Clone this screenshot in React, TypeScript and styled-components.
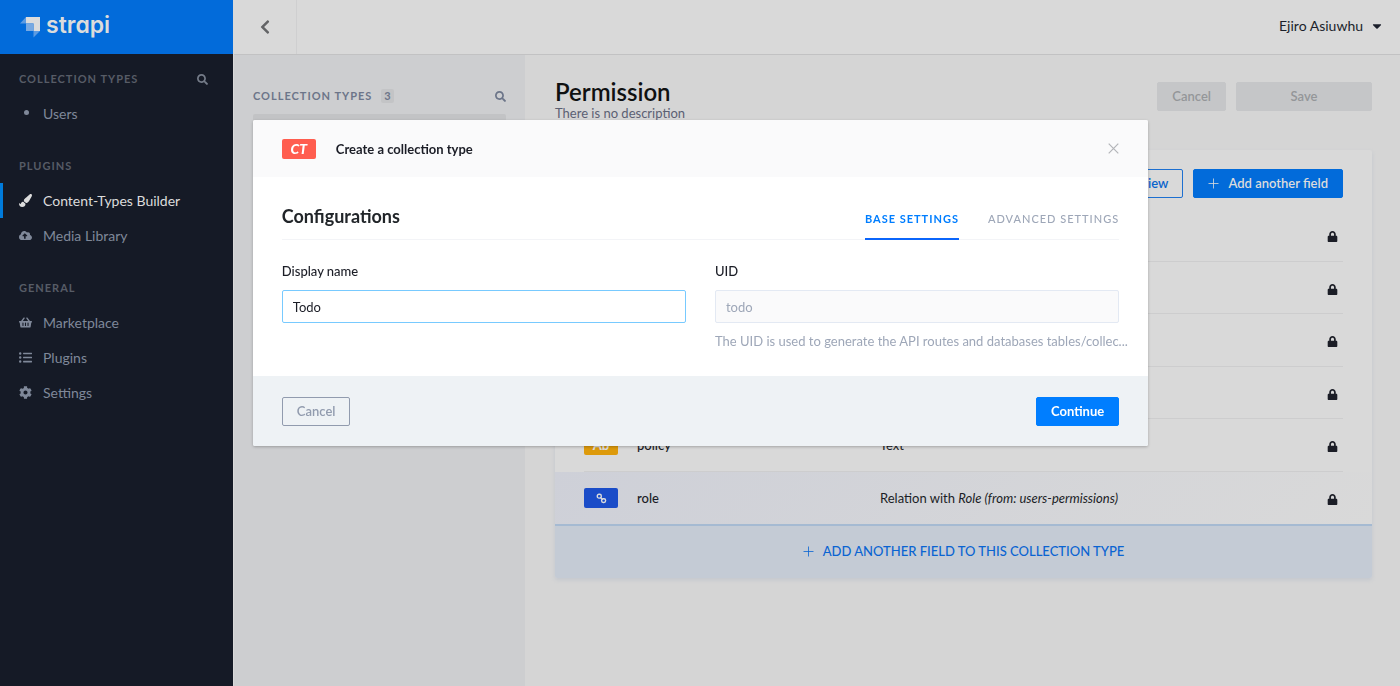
import React from 'react';
import styled, { createGlobalStyle, css } from 'styled-components';
import {
  FaPaintBrush,
  FaCloudUploadAlt,
  FaShoppingBasket,
  FaListUl,
  FaCog,
  FaSearch,
  FaChevronLeft,
  FaCaretDown,
  FaLock,
} from 'react-icons/fa';

const GlobalStyle = createGlobalStyle`
  *, *::before, *::after { box-sizing: border-box; }
  body {
    margin: 0;
    font-family: Lato, "Liberation Sans", sans-serif;
    font-size: 13px;
    line-height: 18px;
    color: #1b1d26;
    background: #d5d5d5;
    -webkit-font-smoothing: antialiased;
  }
  h1, h2, h3, p, ul { margin: 0; padding: 0; }
  ul { list-style: none; }
  button, input { font: inherit; color: inherit; margin: 0; }
  button { cursor: pointer; }
`;

const Page = styled.div`
  display: flex;
  min-height: 100vh;
`;

/* ---------- sidebar ---------- */

const Sidebar = styled.aside`
  flex: 0 0 234px;
  background: #151a26;
  border-right: 1px solid #d9d9d9;
`;

const Brand = styled.a`
  display: flex;
  align-items: center;
  gap: 5px;
  height: 54px;
  padding: 0 0 0 20px;
  background: #026bda;
  color: #dcdcdc;
  text-decoration: none;
`;

const BrandName = styled.span`
  font-family: Inter, Lato, sans-serif;
  font-size: 23px;
  line-height: 28px;
  font-weight: 600;
  font-feature-settings: "cv11";
  padding-bottom: 4px;
`;

const NavGroup = styled.section`
  padding-bottom: 26px;
  &:first-of-type { padding-top: 16px; }
`;

const NavHeading = styled.div`
  display: flex;
  align-items: center;
  justify-content: space-between;
  height: 18px;
  margin-bottom: 8px;
  padding: 0 25px 0 19px;
  color: #575c66;
`;

const SmallCaps = styled.h3`
  font-size: 11px;
  line-height: 18px;
  font-weight: 700;
  letter-spacing: 1px;
  text-transform: uppercase;
`;

const IconButton = styled.button`
  display: flex;
  align-items: center;
  justify-content: center;
  padding: 0;
  border: 0;
  background: none;
`;

const NavLink = styled.a<{ $active?: boolean }>`
  display: grid;
  grid-template-columns: 14px 1fr;
  gap: 11px;
  align-items: center;
  height: 35px;
  padding-left: 15px;
  border-left: 3px solid ${p => (p.$active ? '#007bdb' : 'transparent')};
  color: ${p => (p.$active ? '#dcdcdc' : '#7f8899')};
  font-size: 14px;
  text-decoration: none;
  svg { justify-self: center; }
`;

const Bullet = styled.i`
  justify-self: center;
  width: 5px;
  height: 5px;
  margin: 0 0 2px 3px;
  border-radius: 50%;
  background: currentColor;
`;

/* ---------- top bar ---------- */

const Content = styled.div`
  flex: 1;
  min-width: 0;
  display: flex;
  flex-direction: column;
`;

const TopBar = styled.header`
  display: flex;
  justify-content: space-between;
  height: 55px;
  background: #d9d9d9;
  border-bottom: 1px solid #c2c2c3;
`;

const BackButton = styled(IconButton)`
  width: 63px;
  border-right: 1px solid #cfcfd0;
  color: #636466;
`;

const UserMenu = styled.button`
  display: flex;
  align-items: center;
  gap: 7px;
  padding: 0 16px 2px 0;
  border: 0;
  background: none;
  font-size: 14px;
  color: #1b1f2b;
`;

const Columns = styled.div`
  flex: 1;
  display: flex;
`;

const TypesPanel = styled.aside`
  flex: 0 0 291px;
  padding: 32px 19px;
  background: #cdced0;
`;

const PanelHeading = styled.div`
  display: flex;
  align-items: center;
  gap: 9px;
  height: 18px;
  margin-bottom: 9px;
  color: #6c7589;
  button { margin-left: auto; }
`;

const Count = styled.span`
  padding: 0 3px;
  border-radius: 2px;
  background: #c3c4c6;
  font-size: 11px;
  line-height: 14px;
  font-weight: 700;
`;

const TypeItem = styled.a`
  display: block;
  height: 34px;
  border-radius: 2px;
  background: #c2c3c5;
  padding: 8px 16px;
  color: inherit;
  text-decoration: none;
`;

const Main = styled.main`
  flex: 1;
  min-width: 0;
  padding: 25px 28px 40px 30px;
`;

const TitleRow = styled.div`
  display: flex;
  justify-content: space-between;
  align-items: flex-start;
  height: 70px;
`;

const Title = styled.h1`
  font-size: 24px;
  line-height: 24px;
  font-weight: 600;
  color: #0f1111;
`;

const Description = styled.p`
  color: #5b6073;
`;

const Actions = styled.div`
  display: flex;
  justify-content: flex-end;
  gap: 10px;
`;

const PageActions = styled(Actions)`
  padding-top: 2px;
`;

const looks = {
  disabled: css`background: #c5c6c8; color: #949699; border-color: #c5c6c8;`,
  primary: css`background: #026bda; color: #dcdcdc; border-color: #026bda;`,
  outline: css`background: transparent; color: #0a64cc; border-color: #1d6fd0;`,
  bright: css`background: #007eff; color: #fff; border-color: #007eff;`,
  ghost: css`background: transparent; color: #919bae; border-color: #919bae;`,
};

const Button = styled.button<{ $look: keyof typeof looks; $wide?: boolean }>`
  display: flex;
  align-items: center;
  justify-content: center;
  gap: 9px;
  height: 29px;
  min-width: ${p => (p.$wide ? '136px' : '0')};
  padding: 0 14px 1px;
  border: 1px solid;
  border-radius: 2px;
  font-weight: ${p => (p.$look === 'bright' ? 700 : 600)};
  white-space: nowrap;
  ${p => looks[p.$look]}
`;

/* ---------- field list ---------- */

const Card = styled.section`
  background: #d9d9d9;
  border-radius: 2px;
  box-shadow: 0 2px 4px #c3c7ce;
`;

const CardHead = styled(Actions)`
  padding: 19px 29px 11px;
`;

const FieldTable = styled.table`
  width: 100%;
  border-collapse: collapse;
  table-layout: fixed;
  td { padding: 0; }
  td:first-child { width: 82px; padding-left: 29px; }
  td:nth-child(2) { width: 243px; }
  td:last-child { width: 60px; padding-right: 29px; }
`;

const FieldRow = styled.tr<{ $relation?: boolean }>`
  background: ${p => (p.$relation ? 'linear-gradient(135deg, #ced0d8, #d9d9d9)' : 'none')};
`;

const Cell = styled.div<{ $end?: boolean; $last?: boolean; $tall?: boolean }>`
  display: flex;
  align-items: center;
  justify-content: ${p => (p.$end ? 'flex-end' : 'flex-start')};
  height: ${p => (p.$tall ? '53px' : '52px')};
  padding: ${p => (p.$end ? '3px 5px 0 0' : '0')};
  border-bottom: ${p => (p.$last ? '0' : '1px solid #cdcdce')};
  white-space: pre;
`;

const FieldName = styled.span`
  font-weight: 500;
`;

const Badge = styled.span<{ $color: string }>`
  display: inline-flex;
  align-items: center;
  justify-content: center;
  width: 34px;
  height: 20px;
  border-radius: 2px;
  background: ${p => p.$color};
  color: #dcdcdc;
  font-weight: 900;
`;

const TypeBadge = styled(Badge)`
  color: #fff;
  font-size: 14px;
  font-style: italic;
`;

const AddBar = styled.button`
  display: flex;
  align-items: center;
  justify-content: center;
  gap: 9px;
  width: 100%;
  height: 54px;
  padding: 0 0 2px;
  border: 0;
  border-top: 2px solid #a5bad2;
  border-radius: 0 0 2px 2px;
  background: #c4cbd5;
  color: #0a64d2;
  font-weight: 500;
  text-transform: uppercase;
`;

/* ---------- modal ---------- */

const Overlay = styled.div`
  position: fixed;
  inset: 0;
  display: flex;
  justify-content: center;
  align-items: flex-start;
  padding: 120px 0 0 1px;
`;

const Modal = styled.form`
  width: 64%;
  min-width: 640px;
  border-radius: 2px;
  overflow: hidden;
  background: #fff;
  box-shadow: 0 1px 3px rgba(0, 0, 0, 0.25);
`;

const ModalHead = styled.header`
  display: flex;
  align-items: center;
  gap: 20px;
  height: 57px;
  padding: 0 29px;
  background: #fafafb;
  button { margin-left: auto; color: #b3b5b9; }
`;

const ModalTitle = styled.h2`
  font-size: 13px;
  line-height: 18px;
  font-weight: 700;
`;

const ModalBody = styled.div`
  padding: 21px 29px 26px;
`;

const ConfigRow = styled.div`
  display: flex;
  justify-content: space-between;
  height: 42px;
  border-bottom: 1px solid #f3f4f7;
`;

const ConfigTitle = styled.h2`
  font-size: 18px;
  line-height: 36px;
  font-weight: 700;
  color: #212529;
`;

const Tabs = styled.div`
  display: flex;
  gap: 29px;
`;

const Tab = styled.button<{ $active?: boolean }>`
  height: 42px;
  padding: 2px 0 0;
  border: 0;
  border-bottom: 2px solid ${p => (p.$active ? '#0b65fb' : 'transparent')};
  background: none;
  color: ${p => (p.$active ? '#007eff' : '#9ea7b8')};
  font-size: 11px;
  line-height: 18px;
  font-weight: ${p => (p.$active ? 700 : 500)};
  letter-spacing: 1px;
  text-transform: uppercase;
`;

const Fields = styled.div`
  display: grid;
  grid-template-columns: 1fr 1fr;
  gap: 29px;
  padding-top: 22px;
`;

const Field = styled.div`
  min-width: 0;
  label {
    display: block;
    margin-bottom: 10px;
    font-weight: 500;
  }
`;

const TextInput = styled.input`
  display: block;
  width: 100%;
  height: 33px;
  padding: 0 10px;
  border: 1px solid #78caff;
  border-radius: 2px;
  outline: 0;
  background: #fff;
  &:disabled {
    border-color: #e3e9f3;
    background: #fafafb;
    color: #9ea7b8;
  }
`;

const Hint = styled.p`
  margin-top: 9px;
  color: #9ea7b8;
  white-space: nowrap;
`;

const ModalFoot = styled.footer`
  display: flex;
  justify-content: space-between;
  align-items: center;
  height: 70px;
  padding: 0 29px;
  background: #eef2f5;
`;

/* ---------- drawings ---------- */

const Logo = () => (
  <svg width="21" height="22" viewBox="0 0 21 22" aria-hidden="true">
    <path d="M6 1h14v14h-6.500V7.500H6z" fill="#dcdcdc" />
    <path d="M6 7.500h7.500V15H6z" fill="#78a9e2" />
    <path d="M6 1v6.500H0z" fill="#5c9be2" />
    <path d="M13.500 15H20l-6.500 6.500z" fill="#5c9be2" />
  </svg>
);

const Plus = () => (
  <svg width="11" height="11" viewBox="0 0 11 11" aria-hidden="true">
    <path d="M5.500 0.500v10M0.500 5.500h10" stroke="currentColor" fill="none" opacity="0.8" />
  </svg>
);

const Cross = () => (
  <svg width="11" height="11" viewBox="0 0 11 11" aria-hidden="true">
    <path d="M0.700 0.700l9.600 9.600M10.300 0.700L0.700 10.300" stroke="currentColor" strokeWidth="1.200" fill="none" />
  </svg>
);

const Chain = () => (
  <svg width="11" height="11" viewBox="0 0 11 11" aria-hidden="true">
    <g fill="none" stroke="currentColor" strokeWidth="1.400">
      <rect x="1.300" y="1.300" width="4" height="3.800" rx="1.700" />
      <rect x="5.600" y="5.700" width="4" height="3.800" rx="1.700" />
      <path d="M4.200 4.200l2.600 2.600" />
    </g>
  </svg>
);

/* ---------- data ---------- */

const navGroups = [
  { title: 'Collection types', search: true, links: [{ label: 'Users', icon: <Bullet /> }] },
  {
    title: 'Plugins',
    links: [
      { label: 'Content-Types Builder', icon: <FaPaintBrush size={13} />, active: true },
      { label: 'Media Library', icon: <FaCloudUploadAlt size={13} /> },
    ],
  },
  {
    title: 'General',
    links: [
      { label: 'Marketplace', icon: <FaShoppingBasket size={13} /> },
      { label: 'Plugins', icon: <FaListUl size={13} /> },
      { label: 'Settings', icon: <FaCog size={13} /> },
    ],
  },
] as { title: string; search?: boolean; links: { label: string; icon: React.ReactNode; active?: boolean }[] }[];

const fields = ['type', 'controller', 'action', 'enabled', 'policy'];

export default function App() {
  return (
    <>
      <GlobalStyle />
      <Page>
        <Sidebar>
          <Brand href="#home">
            <Logo />
            <BrandName>strapi</BrandName>
          </Brand>
          <nav>
            {navGroups.map(group => (
              <NavGroup key={group.title}>
                <NavHeading>
                  <SmallCaps>{group.title}</SmallCaps>
                  {group.search && (
                    <IconButton aria-label="Search">
                      <FaSearch size={11} color="#747b88" />
                    </IconButton>
                  )}
                </NavHeading>
                {group.links.map(link => (
                  <NavLink key={link.label} href="#nav" $active={link.active}>
                    {link.icon}
                    {link.label}
                  </NavLink>
                ))}
              </NavGroup>
            ))}
          </nav>
        </Sidebar>

        <Content>
          <TopBar>
            <BackButton aria-label="Back">
              <FaChevronLeft size={16} />
            </BackButton>
            <UserMenu>
              Ejiro Asiuwhu
              <FaCaretDown size={14} />
            </UserMenu>
          </TopBar>
          <Columns>
            <TypesPanel>
              <PanelHeading>
                <SmallCaps>Collection types</SmallCaps>
                <Count>3</Count>
                <IconButton aria-label="Search collection types">
                  <FaSearch size={11} color="#6c7589" />
                </IconButton>
              </PanelHeading>
              <TypeItem href="#permission">Permission</TypeItem>
            </TypesPanel>
            <Main>
              <TitleRow>
                <div>
                  <Title>Permission</Title>
                  <Description>There is no description</Description>
                </div>
                <PageActions>
                  <Button $look="disabled">Cancel</Button>
                  <Button $look="disabled" $wide>Save</Button>
                </PageActions>
              </TitleRow>
              <Card>
                <CardHead>
                  <Button $look="outline">Configure the view</Button>
                  <Button $look="primary">
                    <Plus />
                    Add another field
                  </Button>
                </CardHead>
                <FieldTable>
                  <tbody>
                    {fields.map((name, i) => (
                      <FieldRow key={name}>
                        <td><Cell $tall={i % 2 === 0}><Badge $color="#dd9a0b">Ab</Badge></Cell></td>
                        <td><Cell $tall={i % 2 === 0}><FieldName>{name}</FieldName></Cell></td>
                        <td><Cell $tall={i % 2 === 0}>Text</Cell></td>
                        <td><Cell $tall={i % 2 === 0} $end><FaLock size={11} /></Cell></td>
                      </FieldRow>
                    ))}
                    <FieldRow $relation>
                      <td><Cell $last><Badge $color="#1a4cc8"><Chain /></Badge></Cell></td>
                      <td><Cell $last><FieldName>role</FieldName></Cell></td>
                      <td><Cell $last>Relation with <em>Role (from: users-permissions)</em></Cell></td>
                      <td><Cell $last $end><FaLock size={11} /></Cell></td>
                    </FieldRow>
                  </tbody>
                </FieldTable>
                <AddBar>
                  <Plus />
                  Add another field to this collection type
                </AddBar>
              </Card>
            </Main>
          </Columns>
        </Content>
      </Page>

      <Overlay>
        <Modal role="dialog" aria-label="Create a collection type" onSubmit={e => e.preventDefault()}>
          <ModalHead>
            <TypeBadge $color="#ff5d4f">CT</TypeBadge>
            <ModalTitle>Create a collection type</ModalTitle>
            <IconButton type="button" aria-label="Close"><Cross /></IconButton>
          </ModalHead>
          <ModalBody>
            <ConfigRow>
              <ConfigTitle>Configurations</ConfigTitle>
              <Tabs role="tablist">
                <Tab type="button" role="tab" aria-selected="true" $active>Base settings</Tab>
                <Tab type="button" role="tab" aria-selected="false">Advanced settings</Tab>
              </Tabs>
            </ConfigRow>
            <Fields>
              <Field>
                <label htmlFor="name">Display name</label>
                <TextInput id="name" defaultValue="Todo" />
              </Field>
              <Field>
                <label htmlFor="uid">UID</label>
                <TextInput id="uid" defaultValue="todo" disabled />
                <Hint>The UID is used to generate the API routes and databases tables/collec...</Hint>
              </Field>
            </Fields>
          </ModalBody>
          <ModalFoot>
            <Button type="button" $look="ghost">Cancel</Button>
            <Button type="submit" $look="bright">Continue</Button>
          </ModalFoot>
        </Modal>
      </Overlay>
    </>
  );
}
